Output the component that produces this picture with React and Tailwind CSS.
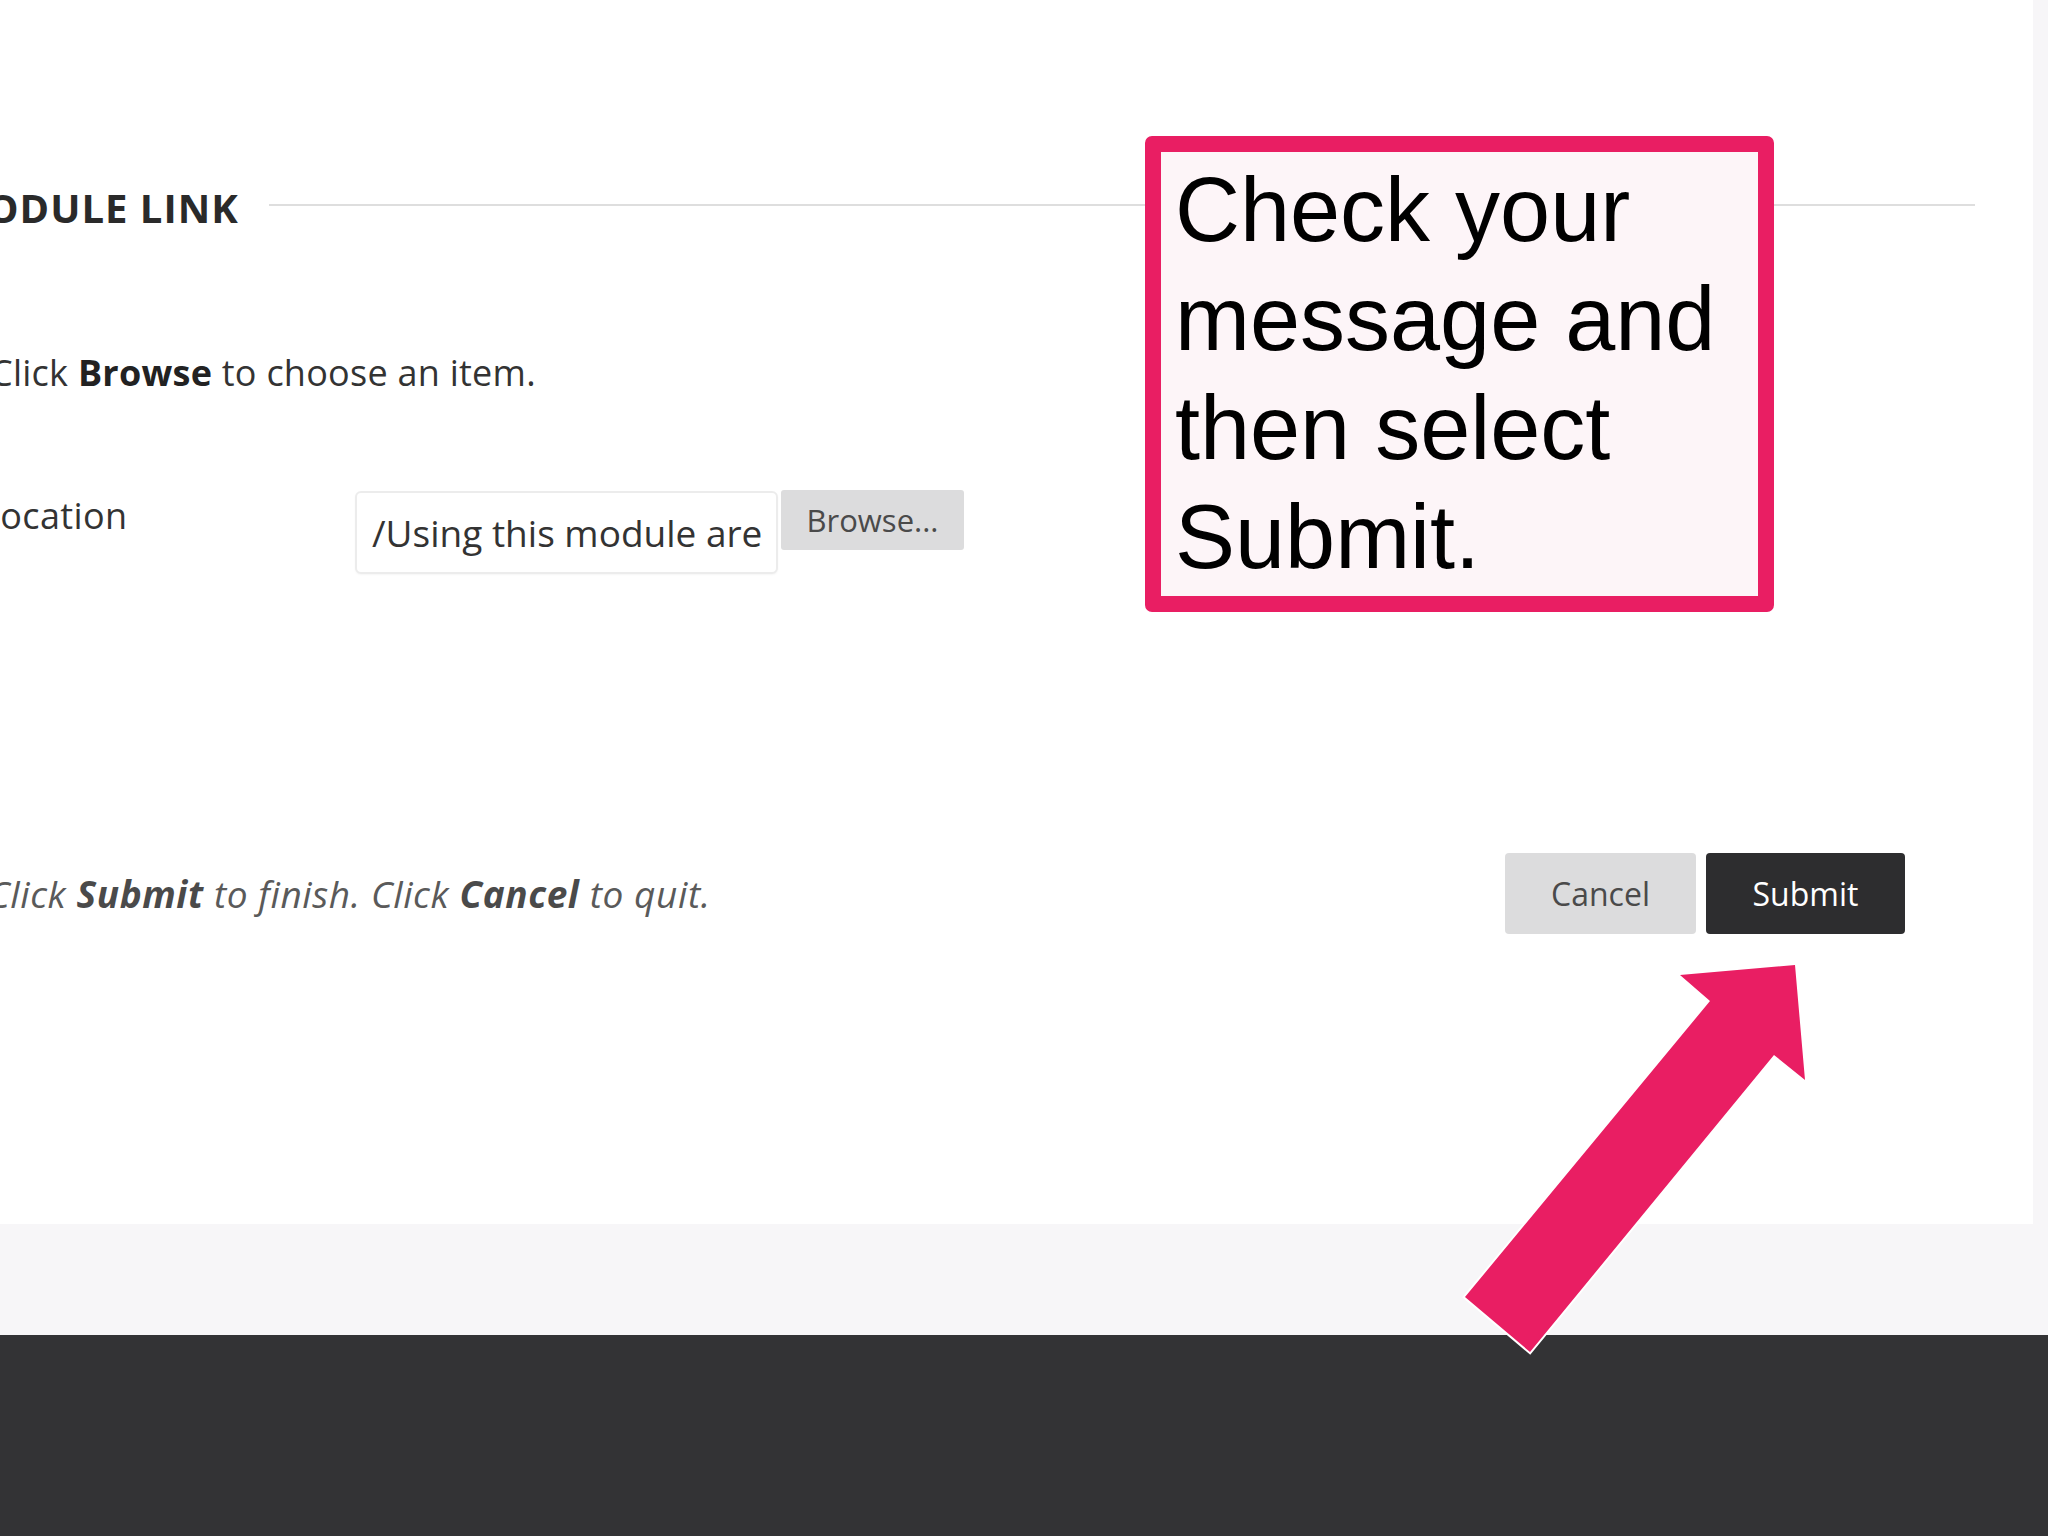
export default function App() {
  const sans = { fontFamily: '"Open Sans", "Noto Sans", sans-serif' };
  return (
    <div className="relative w-[2048px] h-[1536px] overflow-hidden flex flex-col bg-[#333335]" style={sans}>
      <div className="h-[1335px] bg-[#f7f6f8] shrink-0">
        <div className="w-[2033px] h-[1224px] bg-white flex flex-col pt-[183px]">
          {/* heading */}
          <div className="flex items-center h-[50px]">
            <span className="ml-[-52px] text-[40px] leading-[50px] font-bold tracking-[1px] text-[#2a2a2a] whitespace-nowrap">
              MODULE LINK
            </span>
            <div className="flex-1 h-[2px] bg-[#dedede] ml-[30px] mr-[58px] mb-[6px]" />
          </div>

          {/* instruction */}
          <div className="mt-[115px] h-[50px] text-[36px] leading-[50px] tracking-[0.25px] text-[#333] whitespace-nowrap">
            <span className="ml-[-10px]">
              Click <span className="font-bold text-[#222]">Browse</span> to choose an item.
            </span>
          </div>

          {/* location row */}
          <div className="mt-[92px] flex items-start">
            <div className="w-[355px] shrink-0 h-[50px] text-[36px] leading-[50px] tracking-[0.4px] text-[#333] whitespace-nowrap mt-[1px]">
              <span className="ml-[-19px]">Location</span>
            </div>
            <div className="w-[423px] h-[83px] mt-[1px] border-2 border-[#ececec] rounded-[6px] bg-white flex items-center pl-[15px] overflow-hidden shadow-[0_1px_2px_rgba(0,0,0,0.04)]">
              <span className="text-[37px] leading-[50px] text-[#333] whitespace-nowrap">/Using this module are</span>
            </div>
            <div className="w-[183px] h-[60px] ml-[3px] bg-[#dcdcdd] rounded-[3px] flex items-center justify-center">
              <span className="text-[31px] leading-[40px] text-[#4a4a4a] whitespace-nowrap">Browse...</span>
            </div>
          </div>

          {/* submit row */}
          <div className="mt-[279px] h-[81px] flex items-center justify-between pr-[128px]">
            <div className="text-[37px] leading-[50px] italic tracking-[0.6px] text-[#5a5a5a] whitespace-nowrap">
              <span className="ml-[-12px]">
                Click <span className="font-bold text-[#4a4a4a]">Submit</span> to finish. Click{" "}
                <span className="font-bold text-[#4a4a4a]">Cancel</span> to quit.
              </span>
            </div>
            <div className="flex gap-[10px]">
              <div className="w-[191px] h-[81px] bg-[#dcdcdd] rounded-[4px] flex items-center justify-center">
                <span className="text-[32px] leading-[40px] text-[#4a4a4a]">Cancel</span>
              </div>
              <div className="w-[199px] h-[81px] bg-[#2d2d2f] rounded-[4px] flex items-center justify-center">
                <span className="text-[32px] leading-[40px] text-white">Submit</span>
              </div>
            </div>
          </div>
        </div>
      </div>
      <div className="flex-1" />

      {/* callout */}
      <div
        className="absolute left-[1145px] top-[136px] w-[629px] h-[476px] border-[16px] border-[#e91e63] rounded-[7px] bg-[#fdf5f8] pl-[14px] pt-[4px]"
        style={{ fontFamily: '"Liberation Sans", Arial, sans-serif' }}
      >
        <p className="text-[90px] leading-[109px] text-black">
          Check your
          <br />
          message and
          <br />
          then select
          <br />
          Submit.
        </p>
      </div>

      {/* arrow */}
      <svg className="absolute left-0 top-0 pointer-events-none" width="2048" height="1536" viewBox="0 0 2048 1536">
        <polygon
          points="1795,965 1805,1080 1774,1055 1530,1352 1465,1297 1710,1001 1680,975"
          fill="#e91e63"
          stroke="#ffffff"
          strokeWidth="4"
          strokeLinejoin="miter"
          paintOrder="stroke"
        />
      </svg>
    </div>
  );
}
